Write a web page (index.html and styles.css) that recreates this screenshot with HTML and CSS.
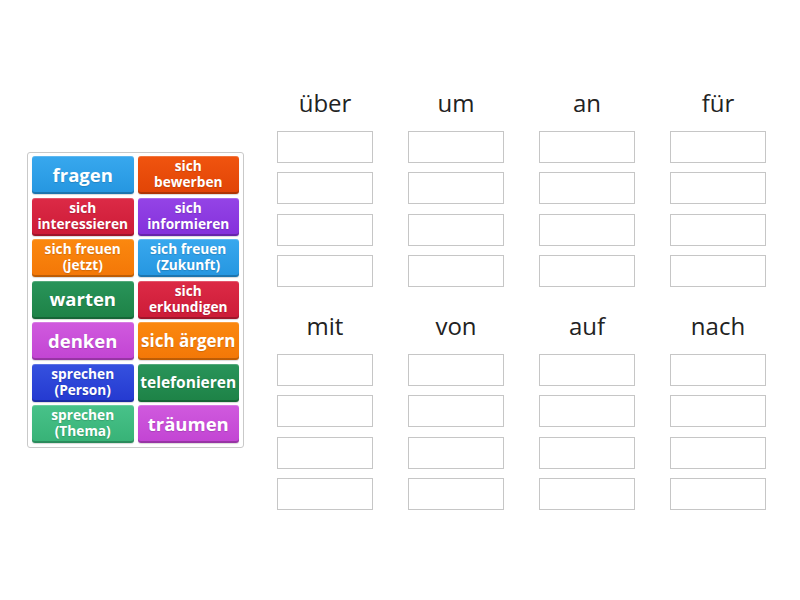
FILE: index.html
```html
<!DOCTYPE html>
<html lang="de">
<head>
    <meta charset="UTF-8">
    <title>Verben mit Präpositionen</title>
    <link rel="stylesheet" href="styles.css">
</head>
<body>
    <div class="page">
        <div class="tray">
            <div class="card blue t-lg">fragen</div>
            <div class="card redorange t-sm">sich<br>bewerben</div>
            <div class="card red t-sm">sich<br>interessieren</div>
            <div class="card purple t-sm">sich<br>informieren</div>
            <div class="card orange t-sm">sich freuen<br>(jetzt)</div>
            <div class="card blue t-sm">sich freuen<br>(Zukunft)</div>
            <div class="card green t-lg">warten</div>
            <div class="card red t-sm">sich<br>erkundigen</div>
            <div class="card magenta t-lg">denken</div>
            <div class="card orange t-17">sich ärgern</div>
            <div class="card navy t-sm">sprechen<br>(Person)</div>
            <div class="card green t-md">telefonieren</div>
            <div class="card teal t-sm">sprechen<br>(Thema)</div>
            <div class="card magenta t-lg">träumen</div>
        </div>

        <div class="groups">
            <div class="group">
                <div class="column"><div class="head">über</div><div class="slot"></div><div class="slot"></div><div class="slot"></div><div class="slot"></div></div>
                <div class="column"><div class="head">um</div><div class="slot"></div><div class="slot"></div><div class="slot"></div><div class="slot"></div></div>
                <div class="column"><div class="head">an</div><div class="slot"></div><div class="slot"></div><div class="slot"></div><div class="slot"></div></div>
                <div class="column"><div class="head">für</div><div class="slot"></div><div class="slot"></div><div class="slot"></div><div class="slot"></div></div>
            </div>
            <div class="group">
                <div class="column"><div class="head">mit</div><div class="slot"></div><div class="slot"></div><div class="slot"></div><div class="slot"></div></div>
                <div class="column"><div class="head">von</div><div class="slot"></div><div class="slot"></div><div class="slot"></div><div class="slot"></div></div>
                <div class="column"><div class="head">auf</div><div class="slot"></div><div class="slot"></div><div class="slot"></div><div class="slot"></div></div>
                <div class="column"><div class="head">nach</div><div class="slot"></div><div class="slot"></div><div class="slot"></div><div class="slot"></div></div>
            </div>
        </div>
    </div>
</body>
</html>
```

FILE: styles.css
```css
body {
    margin: 0;
    background-color: #fff;
    font-family: "Open Sans", "Liberation Sans", sans-serif;
}
.page {
    width: 800px;
    height: 600px;
    display: flex;
    align-items: flex-start;
}
.tray {
    margin: 152px 0 0 27px;
    width: 207px;
    padding: 3px 4px 4px 4px;
    border: 1px solid #c9c9c9;
    border-radius: 3px;
    display: grid;
    grid-template-columns: 101.5px 101.5px;
    grid-auto-rows: 38px;
    column-gap: 4px;
    row-gap: 3.5px;
}
.card {
    display: flex;
    align-items: center;
    justify-content: center;
    text-align: center;
    color: #fff;
    font-weight: 700;
    border-radius: 3px;
    padding-bottom: 2px;
    box-sizing: border-box;
    box-shadow: inset 0 -2px 0 rgba(0,0,0,0.22), inset 0 1px 0 rgba(255,255,255,0.2), 0 1px 1px rgba(0,0,0,0.15);
    text-shadow: 0 1px 1px rgba(0,0,0,0.15);
    white-space: nowrap;
}
.t-lg { font-size: 18.5px; }
.t-17 { font-size: 17px; }
.t-md { font-size: 15.5px; }
.t-sm { font-size: 13.7px; line-height: 16px; }

.blue { background: linear-gradient(#38a8ee, #2596e0); }
.redorange { background: linear-gradient(#f0540f, #e14406); }
.red { background: linear-gradient(#dc2a46, #cc1b37); }
.purple { background: linear-gradient(#9444e6, #8430db); }
.orange { background: linear-gradient(#fb880f, #f37707); }
.green { background: linear-gradient(#29945a, #1d8246); }
.magenta { background: linear-gradient(#d05ade, #c244d3); }
.navy { background: linear-gradient(#3551df, #2439d0); }
.teal { background: linear-gradient(#48c289, #37b276); }

.groups {
    margin: 85px 0 0 33px;
    display: flex;
    flex-direction: column;
    gap: 21px;
}
.group {
    display: flex;
    gap: 35px;
}
.column {
    width: 96px;
    display: flex;
    flex-direction: column;
    gap: 9.33px;
}
.head {
    height: 36px;
    line-height: 36px;
    margin-bottom: 0.67px;
    text-align: center;
    font-size: 24px;
    color: #222;
}
.slot {
    height: 30px;
    border: 1px solid #c6c6c6;
}
```
